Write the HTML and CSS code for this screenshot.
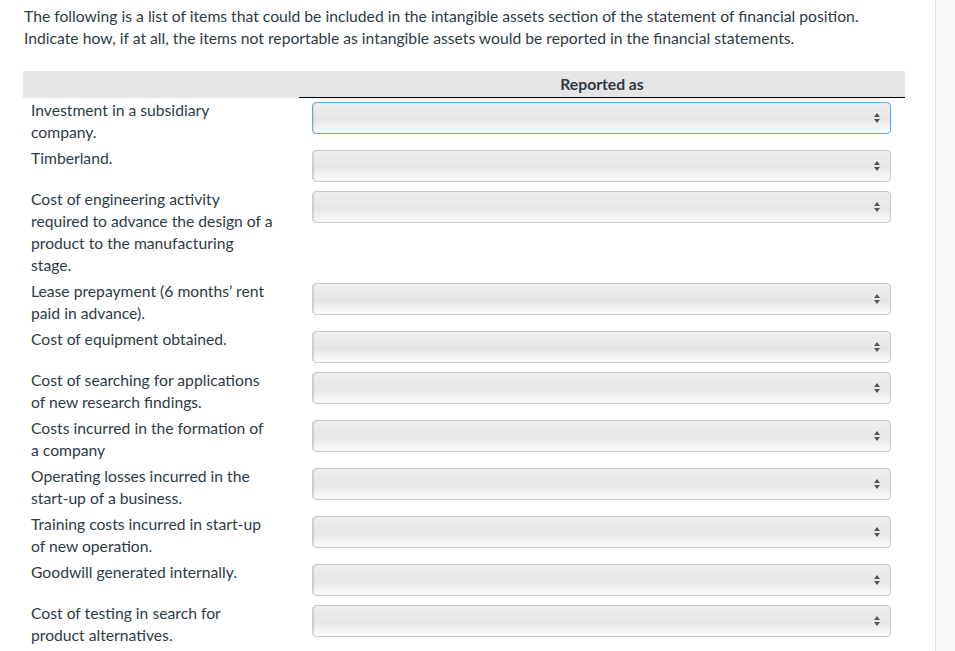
FILE: index.html
```html
<!DOCTYPE html>
<html>
<head>
<meta charset="utf-8">
<link rel="stylesheet" href="styles.css">
</head>
<body>
<div class="page">
  <main class="content">
    <p class="intro">The following is a list of items that could be included in the intangible assets section of the statement of financial position.<br>Indicate how, if at all, the items not reportable as intangible assets would be reported in the financial statements.</p>
    <table class="grid">
      <thead>
        <tr><th class="h-item"></th><th class="h-rep">Reported as</th></tr>
      </thead>
      <tbody>
        <tr><td class="item">Investment in a subsidiary company.</td><td class="rep"><div class="sel focus"><span class="arr"></span></div></td></tr>
        <tr><td class="item">Timberland.</td><td class="rep"><div class="sel"><span class="arr"></span></div></td></tr>
        <tr><td class="item">Cost of engineering activity required to advance the design of a product to the manufacturing stage.</td><td class="rep"><div class="sel"><span class="arr"></span></div></td></tr>
        <tr><td class="item">Lease prepayment (6 months’ rent paid in advance).</td><td class="rep"><div class="sel"><span class="arr"></span></div></td></tr>
        <tr><td class="item">Cost of equipment obtained.</td><td class="rep"><div class="sel"><span class="arr"></span></div></td></tr>
        <tr><td class="item">Cost of searching for applications of new research findings.</td><td class="rep"><div class="sel"><span class="arr"></span></div></td></tr>
        <tr><td class="item">Costs incurred in the formation of a company</td><td class="rep"><div class="sel"><span class="arr"></span></div></td></tr>
        <tr><td class="item">Operating losses incurred in the start-up of a business.</td><td class="rep"><div class="sel"><span class="arr"></span></div></td></tr>
        <tr><td class="item">Training costs incurred in start-up of new operation.</td><td class="rep"><div class="sel"><span class="arr"></span></div></td></tr>
        <tr><td class="item">Goodwill generated internally.</td><td class="rep"><div class="sel"><span class="arr"></span></div></td></tr>
        <tr><td class="item">Cost of testing in search for product alternatives.</td><td class="rep"><div class="sel"><span class="arr"></span></div></td></tr>
      </tbody>
    </table>
  </main>
  <aside class="strip"></aside>
</div>
</body>
</html>
```

FILE: styles.css
```css
html, body {
  margin: 0;
  padding: 0;
  background: #fff;
}
body {
  font-family: Lato, "Open Sans", sans-serif;
  font-size: 15.7px;
  line-height: 22px;
  color: #2d3b45;
}
.page {
  display: flex;
  height: 651px;
  overflow: hidden;
}
.content {
  width: 935px;
  flex: none;
  padding: 5px 0 0 23px;
  box-sizing: border-box;
}
.strip {
  flex: 1;
  border-left: 1px solid #e2e2e2;
  background: #f9f9f9;
}
.intro {
  margin: 0 0 22px 1px;
}
.grid {
  border-collapse: collapse;
  width: 882px;
  table-layout: fixed;
}
.grid th {
  background: #e5e5e5;
  height: 26px;
  padding: 0;
  font-weight: bold;
  font-size: 15.7px;
  line-height: 22px;
  vertical-align: middle;
}
.h-item {
  width: 276px;
}
.h-rep {
  text-align: center;
  border-bottom: 1px solid #000;
}
.grid td {
  vertical-align: top;
  padding: 0;
}
.item {
  padding: 1px 24px 3px 8px !important;
}
.rep {
  padding: 4px 14px 5px 13px !important;
}
.sel {
  position: relative;
  height: 32px;
  box-sizing: border-box;
  border: 1px solid #cacaca;
  border-radius: 4px;
  background: linear-gradient(to bottom, #efefef 0%, #e6e6e6 55%, #fbfbfb 100%);
  box-shadow: inset 2px 0 2px -1px rgba(0,0,0,0.12);
}
.sel.focus {
  border-color: #5aaaf0;
}
.arr {
  position: absolute;
  right: 9px;
  top: 50%;
  width: 8px;
  height: 12px;
  margin-top: -6px;
}
.arr::before, .arr::after {
  content: "";
  position: absolute;
  left: 1px;
  border-left: 3px solid transparent;
  border-right: 3px solid transparent;
}
.arr::before {
  top: 1px;
  border-bottom: 4px solid #555;
}
.arr::after {
  bottom: 1px;
  border-top: 4px solid #555;
}
```
